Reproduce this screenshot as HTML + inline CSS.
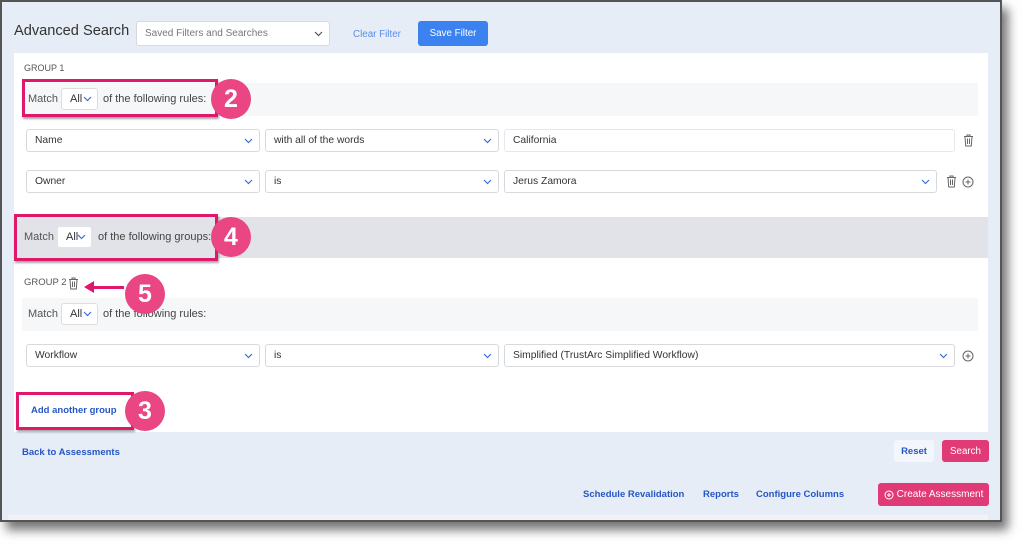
<!DOCTYPE html>
<html><head><meta charset="utf-8"><style>
*{box-sizing:border-box;margin:0;padding:0}
body{width:1024px;height:544px;background:#fff;position:relative;overflow:hidden;font-family:"Liberation Sans",sans-serif;color:#333}
.a{position:absolute}
.frame{left:0;top:0;width:1002px;height:522px;border:2px solid #555;background:#e6edf7;box-shadow:6px 8px 10px rgba(0,0,0,.55)}
.sel{position:absolute;background:#fff;border:1px solid #d6d9de;border-radius:3px;font-size:10.3px;color:#333;padding-left:8px;display:flex;align-items:center}
.sel svg{position:absolute;right:6px;top:50%;margin-top:-3px}
.t{position:absolute;font-size:10px;white-space:nowrap}
.m{font-size:11px}
.box{position:absolute;border:3px solid #e0186c;box-shadow:1px 2px 2px rgba(0,0,0,.35)}
.circ{position:absolute;width:40px;height:40px;border-radius:50%;background:#e94683;color:#fff;font-size:25px;font-weight:bold;display:flex;align-items:center;justify-content:center}
.lnk{position:absolute;font-size:9.5px;color:#2656c4;white-space:nowrap;font-weight:bold}
</style></head><body>
<div class="a frame"></div>
<div class="t" style="left:14px;top:23px;font-size:14.6px;color:#333">Advanced Search</div>
<div class="sel" style="left:136px;top:21px;width:194px;height:25px;color:#777;font-size:10px">Saved Filters and Searches<svg width="9" height="6"><path d="M1 1l3.5 3.5L8 1" stroke="#555" fill="none" stroke-width="1.2"/></svg></div>
<div class="t" style="left:353px;top:29px;color:#5a8de6;font-size:9.8px">Clear Filter</div>
<div class="a" style="left:418px;top:21px;width:70px;height:25px;background:#3b82f0;border-radius:3px;color:#fff;font-size:9.8px;display:flex;align-items:center;justify-content:center">Save Filter</div>

<div class="a" style="left:14px;top:53px;width:974px;height:379px;background:#fff"></div>
<div class="t" style="left:24px;top:63px;font-size:9px;color:#555">GROUP 1</div>
<div class="a" style="left:22px;top:83px;width:956px;height:33px;background:#f6f7f9"></div>
<div class="t m" style="left:28px;top:93px;color:#555">Match</div>
<div class="sel" style="left:61px;top:88px;width:37px;height:22px;border-color:#ddd;font-size:11px">All<svg width="9" height="6" style="right:5px"><path d="M1 1l3.5 3.5L8 1" stroke="#3b6fd8" fill="none" stroke-width="1.2"/></svg></div>
<div class="t m" style="left:103px;top:93px;color:#444">of the following rules:</div>

<div class="sel" style="left:26px;top:129px;width:234px;height:23px">Name<svg width="9" height="6"><path d="M1 1l3.5 3.5L8 1" stroke="#3b6fd8" fill="none" stroke-width="1.2"/></svg></div>
<div class="sel" style="left:265px;top:129px;width:234px;height:23px">with all of the words<svg width="9" height="6"><path d="M1 1l3.5 3.5L8 1" stroke="#3b6fd8" fill="none" stroke-width="1.2"/></svg></div>
<div class="sel" style="left:504px;top:129px;width:451px;height:23px;border-color:#e6e8eb">California</div>
<svg class="a" style="left:963px;top:134px" width="11" height="13"><path d="M1 2.5h9M4 2.5V1h3v1.5M2 2.5l.7 9.5h5.6l.7-9.5M4.5 4.5v5.5M6.5 4.5v5.5" stroke="#666" fill="none" stroke-width="1"/></svg>

<div class="sel" style="left:26px;top:170px;width:234px;height:23px">Owner<svg width="9" height="6"><path d="M1 1l3.5 3.5L8 1" stroke="#3b6fd8" fill="none" stroke-width="1.2"/></svg></div>
<div class="sel" style="left:265px;top:170px;width:234px;height:23px">is<svg width="9" height="6"><path d="M1 1l3.5 3.5L8 1" stroke="#3b6fd8" fill="none" stroke-width="1.2"/></svg></div>
<div class="sel" style="left:504px;top:170px;width:433px;height:23px">Jerus Zamora<svg width="9" height="6"><path d="M1 1l3.5 3.5L8 1" stroke="#3b6fd8" fill="none" stroke-width="1.2"/></svg></div>
<svg class="a" style="left:946px;top:175px" width="11" height="13"><path d="M1 2.5h9M4 2.5V1h3v1.5M2 2.5l.7 9.5h5.6l.7-9.5M4.5 4.5v5.5M6.5 4.5v5.5" stroke="#666" fill="none" stroke-width="1"/></svg>
<svg class="a" style="left:962px;top:176px" width="12" height="12"><circle cx="6" cy="6" r="5" stroke="#666" fill="none"/><path d="M6 3.5v5M3.5 6h5" stroke="#666"/></svg>

<div class="a" style="left:14px;top:217px;width:974px;height:41px;background:#e1e3e8"></div>
<div class="t m" style="left:24px;top:231px;color:#555">Match</div>
<div class="sel" style="left:57px;top:226px;width:35px;height:22px;border-color:#e1e3e8;font-size:11px">All<svg width="9" height="6" style="right:5px"><path d="M1 1l3.5 3.5L8 1" stroke="#3b6fd8" fill="none" stroke-width="1.2"/></svg></div>
<div class="t m" style="left:98px;top:231px;color:#444">of the following groups:</div>

<div class="t" style="left:24px;top:277px;font-size:9.5px;color:#555">GROUP 2</div>
<svg class="a" style="left:68px;top:277px" width="11" height="13"><path d="M1 2.5h9M4 2.5V1h3v1.5M2 2.5l.7 9.5h5.6l.7-9.5M4.5 4.5v5.5M6.5 4.5v5.5" stroke="#666" fill="none" stroke-width="1"/></svg>
<div class="a" style="left:22px;top:298px;width:956px;height:33px;background:#f6f7f9"></div>
<div class="t m" style="left:28px;top:308px;color:#555">Match</div>
<div class="sel" style="left:61px;top:303px;width:37px;height:22px;border-color:#ddd;font-size:11px">All<svg width="9" height="6" style="right:5px"><path d="M1 1l3.5 3.5L8 1" stroke="#3b6fd8" fill="none" stroke-width="1.2"/></svg></div>
<div class="t m" style="left:103px;top:308px;color:#444">of the following rules:</div>

<div class="sel" style="left:26px;top:344px;width:234px;height:23px">Workflow<svg width="9" height="6"><path d="M1 1l3.5 3.5L8 1" stroke="#3b6fd8" fill="none" stroke-width="1.2"/></svg></div>
<div class="sel" style="left:265px;top:344px;width:234px;height:23px">is<svg width="9" height="6"><path d="M1 1l3.5 3.5L8 1" stroke="#3b6fd8" fill="none" stroke-width="1.2"/></svg></div>
<div class="sel" style="left:504px;top:344px;width:451px;height:23px">Simplified (TrustArc Simplified Workflow)<svg width="9" height="6"><path d="M1 1l3.5 3.5L8 1" stroke="#3b6fd8" fill="none" stroke-width="1.2"/></svg></div>
<svg class="a" style="left:962px;top:350px" width="12" height="12"><circle cx="6" cy="6" r="5" stroke="#666" fill="none"/><path d="M6 3.5v5M3.5 6h5" stroke="#666"/></svg>

<div class="lnk" style="left:31px;top:405px">Add another group</div>

<div class="lnk" style="left:22px;top:447px">Back to Assessments</div>
<div class="a" style="left:894px;top:440px;width:40px;height:22px;background:#f3f7fc;border-radius:3px;color:#2656c4;font-size:9.5px;font-weight:bold;display:flex;align-items:center;justify-content:center">Reset</div>
<div class="a" style="left:942px;top:440px;width:47px;height:22px;background:#e03b76;border-radius:3px;color:#fff;font-size:9.8px;display:flex;align-items:center;justify-content:center">Search</div>
<div class="lnk" style="left:583px;top:489px">Schedule Revalidation</div>
<div class="lnk" style="left:703px;top:489px">Reports</div>
<div class="lnk" style="left:756px;top:489px">Configure Columns</div>
<div class="a" style="left:878px;top:483px;width:111px;height:23px;background:#e03b76;border-radius:3px;color:#fff;font-size:10px;display:flex;align-items:center;justify-content:center"><svg width="10" height="10" style="margin-right:3px"><circle cx="5" cy="5" r="4" stroke="#fff" fill="none"/><path d="M5 3v4M3 5h4" stroke="#fff"/></svg>Create Assessment</div>
<div class="a" style="left:8px;top:515px;width:980px;height:5px;background:#f2f2f2"></div>

<div class="box" style="left:22px;top:79px;width:196px;height:38px"></div>
<div class="circ" style="left:211px;top:79px">2</div>
<div class="box" style="left:14px;top:214px;width:204px;height:47px"></div>
<div class="circ" style="left:211px;top:217px">4</div>
<div class="box" style="left:16px;top:392px;width:118px;height:38px"></div>
<div class="circ" style="left:125px;top:391px">3</div>
<div class="circ" style="left:125px;top:274px">5</div>
<svg class="a" style="left:80px;top:278px" width="50" height="16"><path d="M44 9.5H10" stroke="#e0186c" stroke-width="3"/><path d="M4 9l10-6v12z" fill="#e0186c"/></svg>
</body></html>
